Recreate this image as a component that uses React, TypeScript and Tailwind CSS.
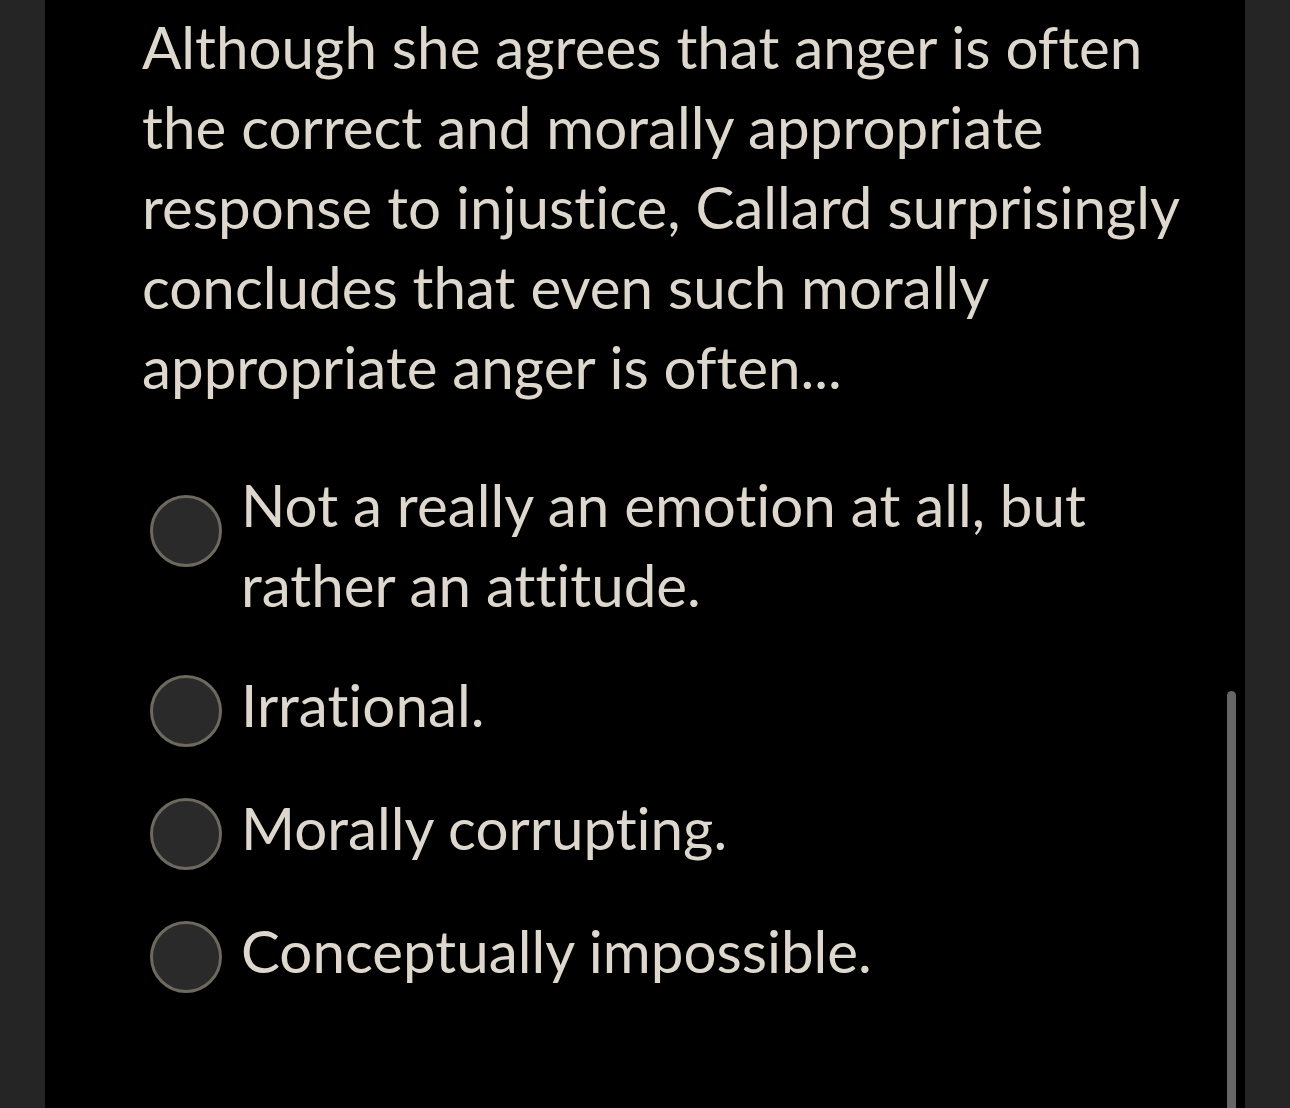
const options = [
  "Not a really an emotion at all, but rather an attitude.",
  "Irrational.",
  "Morally corrupting.",
  "Conceptually impossible.",
];

function Radio() {
  return (
    <span className="mt-[30px] block h-[72px] w-[72px] shrink-0 rounded-full border-[3px] border-[#6e695f] bg-[#2a2a2a]" />
  );
}

export default function App() {
  return (
    <div
      className="flex h-[1108px] w-full overflow-hidden bg-[#252525] text-[#ddd7ce] [font-variant-ligatures:none]"
      style={{ fontFamily: "Lato, 'Noto Sans', sans-serif" }}
    >
      <div className="w-[45px] shrink-0" />
      <main className="relative w-[1200px] shrink-0 bg-black pl-[97px] pr-[30px] pt-[6px]">
        <p className="text-[58.3px] leading-[80px]">
          Although she agrees that anger is often the correct and morally appropriate response to
          injustice, Callard surprisingly concludes that even such morally appropriate anger is
          often...
        </p>
        <ul className="mt-[58px] flex flex-col gap-[40px] pl-[8px]">
          {options.map((o, i) => (
            <li key={i} className="flex items-start gap-[19px]">
              <div className={i === 0 ? "mt-[1px]" : "-mt-[19px]"}>
                <Radio />
              </div>
              <span className="text-[58.3px] leading-[80px]">{o}</span>
            </li>
          ))}
        </ul>
        <div className="absolute left-[1182px] top-[691px] h-[500px] w-[9px] rounded-full bg-[#666666]" />
      </main>
    </div>
  );
}
